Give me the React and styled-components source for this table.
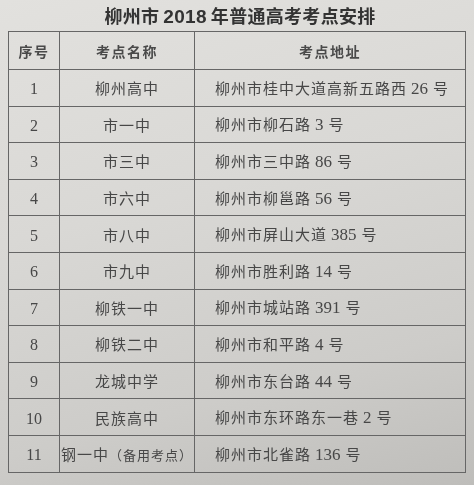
import React from 'react';
import styled, { createGlobalStyle } from 'styled-components';

const GlobalStyle = createGlobalStyle`
  html, body {
    margin: 0;
    padding: 0;
  }
  body {
    font-family: "Noto Sans CJK SC", "Noto Sans", sans-serif;
  }
`;

const Page = styled.div`
  width: 474px;
  height: 485px;
  overflow: hidden;
  background: linear-gradient(165deg, #e2e1de 0%, #d9d8d5 40%, #cdccc9 75%, #bebdba 100%);
  box-sizing: border-box;
  padding: 0 8px;
  filter: blur(0.35px);
`;

const Title = styled.h1`
  margin: 0;
  height: 31px;
  line-height: 31px;
  text-align: center;
  font-size: 18px;
  font-weight: 700;
  color: #333;
  letter-spacing: 0.3px;
  padding-left: 6px;
`;

const Num = styled.span`
  font-family: "Liberation Sans", "Noto Sans", sans-serif;
  font-weight: 700;
  font-size: 19px;
  margin: 0 4px;
`;

const Table = styled.table`
  width: 458px;
  border-collapse: collapse;
  table-layout: fixed;
  color: #474747;
`;

const HeadCell = styled.th`
  height: 37px;
  padding: 0;
  border: 1.5px solid #666;
  font-size: 14px;
  font-weight: 700;
  letter-spacing: 1.5px;
  text-align: center;
  color: #4a4a4a;
  width: ${props => props.$w || 'auto'};
`;

const Row = styled.tr`
  height: 36.6px;
`;

const Cell = styled.td`
  padding: 0;
  border: 1.5px solid #666;
  font-size: 15px;
  letter-spacing: ${props => props.$ls || '1px'};
  white-space: nowrap;
  text-align: ${props => props.$align || 'center'};
  padding-left: ${props => props.$pad || '0'};
`;

const SeqNum = styled.span`
  font-family: "Liberation Serif", serif;
  font-size: 16px;
  letter-spacing: 0;
`;

const Digits = styled.span`
  font-family: "Liberation Serif", serif;
  font-size: 17px;
  letter-spacing: 0;
  margin: 0 5px 0 4px;
`;

const Small = styled.span`
  font-size: 13px;
  letter-spacing: 1px;
`;

const rows = [
  { name: '柳州高中', road: '桂中大道高新五路西', no: '26' },
  { name: '市一中', road: '柳石路', no: '3' },
  { name: '市三中', road: '三中路', no: '86' },
  { name: '市六中', road: '柳邕路', no: '56' },
  { name: '市八中', road: '屏山大道', no: '385' },
  { name: '市九中', road: '胜利路', no: '14' },
  { name: '柳铁一中', road: '城站路', no: '391' },
  { name: '柳铁二中', road: '和平路', no: '4' },
  { name: '龙城中学', road: '东台路', no: '44' },
  { name: '民族高中', road: '东环路东一巷', no: '2' },
  { name: '钢一中', note: '（备用考点）', road: '北雀路', no: '136' },
];

export default function App() {
  return (
    <Page>
      <GlobalStyle />
      <Title>
        柳州市<Num>2018</Num>年普通高考考点安排
      </Title>
      <Table>
        <thead>
          <tr>
            <HeadCell $w="50px">序号</HeadCell>
            <HeadCell $w="134px">考点名称</HeadCell>
            <HeadCell>考点地址</HeadCell>
          </tr>
        </thead>
        <tbody>
          {rows.map((r, i) => (
            <Row key={i}>
              <Cell>
                <SeqNum>{i + 1}</SeqNum>
              </Cell>
              <Cell>
                {r.name}
                {r.note && <Small>{r.note}</Small>}
              </Cell>
              <Cell $align="left" $pad="20px">
                柳州市{r.road}
                <Digits>{r.no}</Digits>号
              </Cell>
            </Row>
          ))}
        </tbody>
      </Table>
    </Page>
  );
}
